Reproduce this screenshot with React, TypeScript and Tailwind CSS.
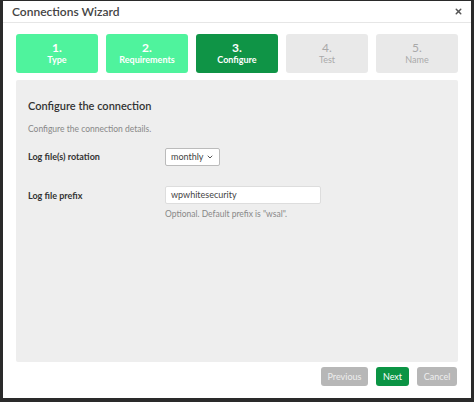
import { ChevronDown, X } from "lucide-react";

const steps = [
    { n: "1.", label: "Type", state: "done" },
    { n: "2.", label: "Requirements", state: "done" },
    { n: "3.", label: "Configure", state: "active" },
    { n: "4.", label: "Test", state: "todo" },
    { n: "5.", label: "Name", state: "todo" },
];

export default function App() {
    return (
        <div
            className="w-[474px] h-[402px] bg-[#2a2a2a] pl-[3px] pr-[3px] pt-[1px] pb-[4px]"
            style={{ fontFamily: 'Lato, "Open Sans", sans-serif' }}
        >
            <div className="h-full bg-white flex flex-col">
                {/* Header */}
                <div className="h-[22px] flex items-center justify-between pl-[9px] pr-[8px] border-b border-[#e6e6e6]">
                    <span className="text-[12px] leading-none text-[#444] font-semibold">Connections Wizard</span>
                    <X className="w-[9px] h-[9px] text-[#555]" strokeWidth={4} />
                </div>

                <div className="flex-1 flex flex-col px-[13px]">
                    {/* Steps */}
                    <div className="grid grid-cols-5 gap-[8px] mt-[11px]">
                        {steps.map(s => (
                            <div
                                key={s.n}
                                className={
                                    "h-[39px] rounded-[3px] flex flex-col items-center justify-center " +
                                    (s.state === "done"
                                        ? "bg-[#4ff39d] text-white"
                                        : s.state === "active"
                                            ? "bg-[#0f9446] text-white"
                                            : "bg-[#e9e9e9] text-[#a9a9a9]")
                                }
                            >
                                <span className={"text-[12px] leading-[12px] " + (s.state === "todo" ? "font-normal" : "font-bold")}>{s.n}</span>
                                <span className={"text-[9px] leading-[10px] mt-[1px] " + (s.state === "todo" ? "font-normal" : "font-bold")}>{s.label}</span>
                            </div>
                        ))}
                    </div>

                    {/* Panel */}
                    <div className="flex-1 mt-[7px] bg-[#eeeeee] rounded-[2px] px-[12px] pt-[20px]">
                        <h2 className="text-[11px] leading-none font-semibold text-[#333]">Configure the connection</h2>
                        <p className="text-[8.5px] leading-none text-[#888] mt-[14px]">Configure the connection details.</p>

                        <div className="flex items-center mt-[14px]">
                            <span className="w-[137px] text-[9px] font-bold text-[#333]">Log file(s) rotation</span>
                            <div className="h-[18px] w-[55px] bg-white border border-[#bbb] rounded-[2px] flex items-center justify-between pl-[5px] pr-[5px]">
                                <span className="text-[9px] text-[#444]">monthly</span>
                                <ChevronDown className="w-[8px] h-[8px] text-[#555]" strokeWidth={3} />
                            </div>
                        </div>

                        <div className="flex mt-[20px]">
                            <span className="w-[137px] text-[9px] font-bold text-[#333] pt-[3px]">Log file prefix</span>
                            <div className="flex flex-col">
                                <div className="h-[18px] w-[156px] bg-white border border-[#ddd] rounded-[2px] flex items-center px-[5px]">
                                    <span className="text-[9px] text-[#444]">wpwhitesecurity</span>
                                </div>
                                <span className="text-[8.5px] text-[#888] mt-[4px]">Optional. Default prefix is "wsal".</span>
                            </div>
                        </div>
                    </div>

                    {/* Footer */}
                    <div className="flex justify-end gap-[8px] pr-[1px] mt-[5px] mb-[12px]">
                        <button className="h-[19px] w-[47px] rounded-[3px] bg-[#b7b7b7] text-[9px] text-[#eee]">Previous</button>
                        <button className="h-[19px] w-[33px] rounded-[3px] bg-[#0b9444] text-[9px] text-white">Next</button>
                        <button className="h-[19px] w-[40px] rounded-[3px] bg-[#b7b7b7] text-[9px] text-[#eee]">Cancel</button>
                    </div>
                </div>
            </div>
        </div>
    );
}
